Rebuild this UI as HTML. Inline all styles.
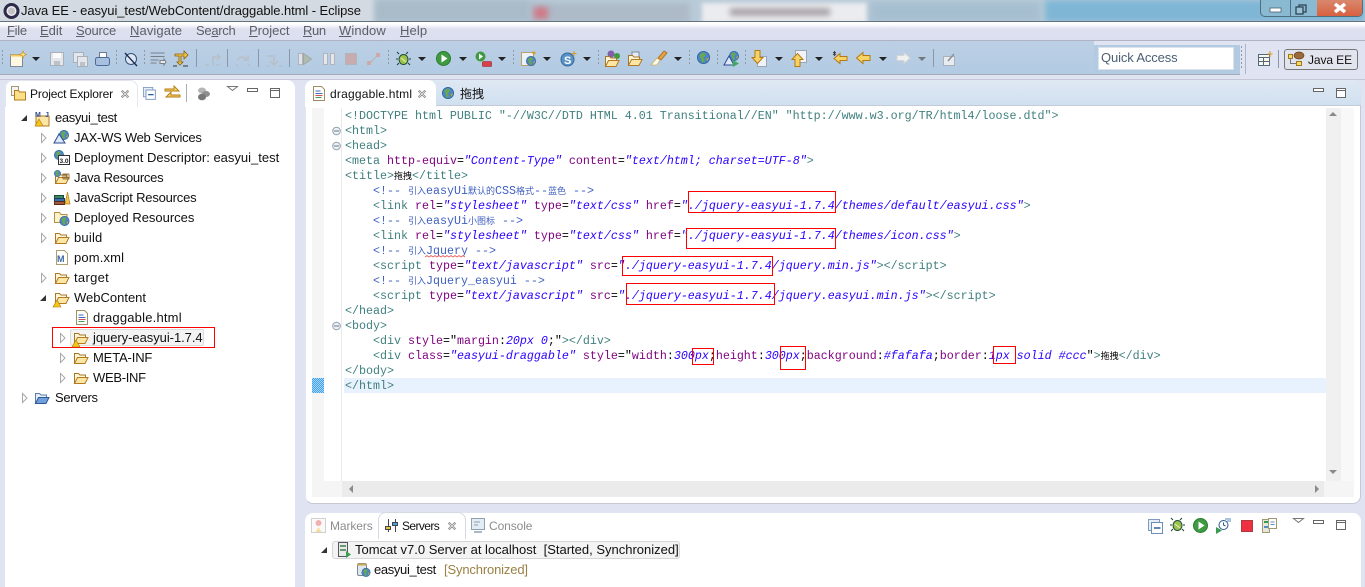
<!DOCTYPE html>
<html><head><meta charset="utf-8"><title>Eclipse</title>
<style>
html,body{margin:0;padding:0}
body{width:1365px;height:587px;overflow:hidden;position:relative;background:#dfe3f2;font-family:"Liberation Sans","Noto Sans CJK SC",sans-serif;font-size:13px;color:#111}
.a{position:absolute}
.t{position:absolute;white-space:nowrap;line-height:20px;height:20px}
.m{color:#5c5f66;top:21px}
.m u{text-decoration:underline}
pre{position:absolute;left:345px;top:109px;margin:0;font:11.67px/15px "Liberation Mono","Noto Sans CJK SC",monospace;color:#000;-webkit-text-size-adjust:none}
.g{color:#3f7f7f}.p{color:#7f007f}.v{color:#2a00ff;font-style:italic}.c{color:#3f5fbf}.k{color:#000}
.s{font-size:9px;line-height:9px}
.r{position:absolute;border:1px solid #f00;box-sizing:border-box}
</style></head><body>

<!-- title bar -->
<div class="a" style="left:0;top:0;width:1365px;height:21px;overflow:hidden;background:#b9cbd8">
 <div class="a" style="left:-10px;top:-6px;width:385px;height:34px;background:#d3dae2;filter:blur(3px)"></div>
 <div class="a" style="left:375px;top:0;width:155px;height:22px;background:#a9bbc9;filter:blur(3px)"></div>
 <div class="a" style="left:530px;top:3px;width:160px;height:20px;background:#adbac8;filter:blur(3px)"></div>
 <div class="a" style="left:534px;top:7px;width:14px;height:12px;background:#cf7a88;filter:blur(3px)"></div>
 <div class="a" style="left:702px;top:3px;width:165px;height:20px;background:#ebecef;filter:blur(2px)"></div>
 <div class="a" style="left:730px;top:8px;width:100px;height:8px;background:#a9a5a9;filter:blur(3px)"></div>
 <div class="a" style="left:870px;top:2px;width:170px;height:20px;background:#a6bfd0;filter:blur(3px)"></div>
 <div class="a" style="left:1045px;top:0;width:320px;height:22px;background:#7fb6d6;filter:blur(3px)"></div>
</div>
<div class="a" style="left:0;top:21px;width:1365px;height:1px;background:#64727d"></div>
<div class="t" style="left:21px;top:1px;font-size:13px;color:#111;letter-spacing:-.08px">Java EE - easyui_test/WebContent/draggable.html - Eclipse</div>
<!-- window controls -->
<div class="a" style="left:1260px;top:-2px;width:103px;height:19px;border:1px solid #4e6f80;border-radius:0 0 5px 5px;box-sizing:border-box;overflow:hidden;background:#8ab9d2">
 <div class="a" style="left:29px;top:0;width:1px;height:19px;background:#4e6f80"></div>
 <div class="a" style="left:56px;top:0;width:46px;height:19px;background:linear-gradient(#d98a70,#d85c3a)"></div>
</div>

<!-- menu bar -->
<div class="a" style="left:0;top:22px;width:1365px;height:19px;background:linear-gradient(#fff 0,#fff 2px,#dee0f0 7px,#dcdff0)"></div>
<div class="a" style="left:0;top:40px;width:1365px;height:1px;background:#aeb4c4"></div>
<div class="t m" style="left:7px;letter-spacing:-.3px"><u>F</u>ile</div>
<div class="t m" style="left:40px"><u>E</u>dit</div>
<div class="t m" style="left:76px;letter-spacing:-.2px"><u>S</u>ource</div>
<div class="t m" style="left:130px;letter-spacing:.1px"><u>N</u>avigate</div>
<div class="t m" style="left:196px;letter-spacing:-.3px">Se<u>a</u>rch</div>
<div class="t m" style="left:249px"><u>P</u>roject</div>
<div class="t m" style="left:303px;letter-spacing:-.4px"><u>R</u>un</div>
<div class="t m" style="left:339px;letter-spacing:.1px"><u>W</u>indow</div>
<div class="t m" style="left:400px;letter-spacing:.1px"><u>H</u>elp</div>

<!-- toolbar -->
<div class="a" style="left:0;top:41px;width:1365px;height:34px;background:#dfe3f2"></div>
<div class="a" style="left:0;top:41px;width:1094px;height:33px;background:linear-gradient(#bccfe4,#b2cbe3)"></div>
<div class="a" style="left:1094px;top:45px;width:146px;height:29px;background:#b2cbe3"></div>
<div class="a" style="left:0;top:74px;width:1240px;height:1px;background:#a6aab8"></div>
<div class="a" style="left:0;top:79px;width:1365px;height:1px;background:#c4c8d6"></div>
<div class="a" style="left:1098px;top:47px;width:136px;height:23px;background:#fff;border:1px solid #dbe2ea;box-sizing:border-box"></div>
<div class="t" style="left:1101px;top:48px;color:#4b5f74;letter-spacing:-.13px">Quick Access</div>
<div class="a" style="left:1284px;top:49px;width:74px;height:21px;background:#e3e5ee;border:1px solid #777;border-radius:3px;box-sizing:border-box"></div>
<div class="t" style="left:1308px;top:50px;font-size:12px;letter-spacing:-.1px">Java EE</div>

<!-- left panel -->
<div class="a" style="left:5px;top:80px;width:290px;height:507px;background:#fff;border-radius:8px 8px 0 0"></div>
<div class="a" style="left:5px;top:80px;width:133px;height:27px;border:1px solid #e3e6f0;border-bottom:0;border-radius:8px 8px 0 0;box-sizing:border-box"></div>
<div class="t" style="left:30px;top:84px;font-size:12px;letter-spacing:-.15px">Project Explorer</div>

<div class="a" style="left:70px;top:329px;width:134px;height:17px;background:#f3f3f3;border:1px solid #dcdcdc;border-radius:2px;box-sizing:border-box"></div>
<div class="t" style="left:55px;top:108px;letter-spacing:-.35px">easyui_test</div>
<div class="t" style="left:74px;top:128px;letter-spacing:-.27px">JAX-WS Web Services</div>
<div class="t" style="left:74px;top:148px">Deployment Descriptor: easyui_test</div>
<div class="t" style="left:74px;top:168px;letter-spacing:-.28px">Java Resources</div>
<div class="t" style="left:74px;top:188px;letter-spacing:-.2px">JavaScript Resources</div>
<div class="t" style="left:74px;top:208px;letter-spacing:-.02px">Deployed Resources</div>
<div class="t" style="left:74px;top:228px;letter-spacing:.2px">build</div>
<div class="t" style="left:74px;top:248px;letter-spacing:.15px">pom.xml</div>
<div class="t" style="left:74px;top:268px;letter-spacing:.3px">target</div>
<div class="t" style="left:74px;top:288px">WebContent</div>
<div class="t" style="left:93px;top:308px;letter-spacing:.2px">draggable.html</div>
<div class="t" style="left:93px;top:328px;letter-spacing:-.05px">jquery-easyui-1.7.4</div>
<div class="t" style="left:93px;top:348px;letter-spacing:-.15px">META-INF</div>
<div class="t" style="left:93px;top:368px;letter-spacing:-.3px">WEB-INF</div>
<div class="t" style="left:55px;top:388px;letter-spacing:-.3px">Servers</div>
<div class="r" style="left:52px;top:327px;width:163px;height:21px"></div>

<!-- editor panel -->
<div class="a" style="left:305px;top:80px;width:1056px;height:424px;background:#fff;border:1px solid #c6c9d2;border-top:0;border-left-color:#e3e6f0;border-radius:8px;box-sizing:border-box"></div>
<div class="a" style="left:305px;top:80px;width:1056px;height:26px;background:linear-gradient(#dfe8f3,#d0e0f0);border-radius:8px 8px 0 0"></div>
<div class="a" style="left:305px;top:80px;width:131px;height:27px;background:#fff;border-radius:8px 8px 0 0"></div>
<div class="a" style="left:436px;top:105px;width:925px;height:1px;background:#c5cbd6"></div>
<div class="t" style="left:330px;top:84px;font-size:12px;letter-spacing:.2px">draggable.html</div>
<div class="t" style="left:460px;top:84px;font-size:12px">拖拽</div>
<div class="a" style="left:312px;top:108px;width:12px;height:389px;background:#f5f5f5"></div>
<div class="a" style="left:341px;top:108px;width:1px;height:373px;background:#eaeaea"></div>
<div class="a" style="left:344px;top:378px;width:982px;height:15px;background:#e8f2fe"></div>
<div class="a" style="left:312px;top:378px;width:12px;height:15px;background:repeating-conic-gradient(#3fa0f0 0 25%,#a8d6fa 0 50%) 0 0/2px 2px"></div>
<div class="a" style="left:1326px;top:108px;width:15px;height:373px;background:#f0f0f0"></div>
<div class="a" style="left:1341px;top:108px;width:13px;height:389px;background:#f8f8f8"></div>
<div class="a" style="left:312px;top:481px;width:1042px;height:16px;background:#f5f5f5"></div>
<div class="a" style="left:342px;top:481px;width:982px;height:16px;background:#ebebeb"></div>

<pre><span class="g">&lt;!DOCTYPE html PUBLIC "-//W3C//DTD HTML 4.01 Transitional//EN" "http://www.w3.org/TR/html4/loose.dtd"&gt;</span>
<span class="g">&lt;html&gt;</span>
<span class="g">&lt;head&gt;</span>
<span class="g">&lt;meta</span> <span class="p">http-equiv</span>=<span class="v">"Content-Type"</span> <span class="p">content</span>=<span class="v">"text/html; charset=UTF-8"</span><span class="g">&gt;</span>
<span class="g">&lt;title&gt;</span><span class="s">拖拽</span><span class="g">&lt;/title&gt;</span>
    <span class="c">&lt;!-- <span class="s">引入</span>easyUi<span class="s">默认的</span>CSS<span class="s">格式</span>--<span class="s">蓝色</span> --&gt;</span>
    <span class="g">&lt;link</span> <span class="p">rel</span>=<span class="v">"stylesheet"</span> <span class="p">type</span>=<span class="v">"text/css"</span> <span class="p">href</span>=<span class="v">"./jquery-easyui-1.7.4/themes/default/easyui.css"</span><span class="g">&gt;</span>
    <span class="c">&lt;!-- <span class="s">引入</span>easyUi<span class="s">小图标</span> --&gt;</span>
    <span class="g">&lt;link</span> <span class="p">rel</span>=<span class="v">"stylesheet"</span> <span class="p">type</span>=<span class="v">"text/css"</span> <span class="p">href</span>=<span class="v">"./jquery-easyui-1.7.4/themes/icon.css"</span><span class="g">&gt;</span>
    <span class="c">&lt;!-- <span class="s">引入</span>Jquery --&gt;</span>
    <span class="g">&lt;script</span> <span class="p">type</span>=<span class="v">"text/javascript"</span> <span class="p">src</span>=<span class="v">"./jquery-easyui-1.7.4/jquery.min.js"</span><span class="g">&gt;&lt;/script&gt;</span>
    <span class="c">&lt;!-- <span class="s">引入</span>Jquery_easyui --&gt;</span>
    <span class="g">&lt;script</span> <span class="p">type</span>=<span class="v">"text/javascript"</span> <span class="p">src</span>=<span class="v">"./jquery-easyui-1.7.4/jquery.easyui.min.js"</span><span class="g">&gt;&lt;/script&gt;</span>
<span class="g">&lt;/head&gt;</span>
<span class="g">&lt;body&gt;</span>
    <span class="g">&lt;div</span> <span class="p">style</span>="<span class="p">margin</span>:<span class="v">20px 0</span>;"<span class="g">&gt;&lt;/div&gt;</span>
    <span class="g">&lt;div</span> <span class="p">class</span>=<span class="v">"easyui-draggable"</span> <span class="p">style</span>="<span class="p">width</span>:<span class="v">300px</span>;<span class="p">height</span>:<span class="v">300px</span>;<span class="p">background</span>:<span class="v">#fafafa</span>;<span class="p">border</span>:<span class="v">1px solid #ccc</span>"<span class="g">&gt;</span><span class="s">拖拽</span><span class="g">&lt;/div&gt;</span>
<span class="g">&lt;/body&gt;</span>
<span class="g">&lt;/html&gt;</span></pre>

<div class="r" style="left:688px;top:191px;width:148px;height:22px"></div>
<div class="r" style="left:686px;top:228px;width:150px;height:21px"></div>
<div class="r" style="left:622px;top:256px;width:151px;height:20px"></div>
<div class="r" style="left:626px;top:283px;width:149px;height:22px"></div>
<div class="r" style="left:692px;top:348px;width:22px;height:17px"></div>
<div class="r" style="left:780px;top:346px;width:26px;height:24px"></div>
<div class="r" style="left:993px;top:346px;width:23px;height:18px"></div>

<!-- bottom panel -->
<div class="a" style="left:305px;top:513px;width:1056px;height:74px;background:#fff;border-radius:8px 8px 0 0"></div>
<div class="a" style="left:378px;top:512px;width:88px;height:27px;border:1px solid #d5d9e4;border-bottom:0;border-radius:8px 8px 0 0;box-sizing:border-box"></div>
<div class="t" style="left:330px;top:516px;color:#8d8d8d;font-size:12px;letter-spacing:-.1px">Markers</div>
<div class="t" style="left:402px;top:516px;font-size:12px;letter-spacing:-.6px">Servers</div>
<div class="t" style="left:489px;top:516px;color:#8d8d8d;font-size:12px;letter-spacing:-.1px">Console</div>
<div class="a" style="left:332px;top:541px;width:348px;height:18px;background:#f3f3f3;border:1px solid #d6d6d6;border-radius:3px;box-sizing:border-box"></div>
<div class="t" style="left:355px;top:540px;white-space:pre">Tomcat v7.0 Server at localhost  [Started, Synchronized]</div>
<div class="t" style="left:374px;top:560px;letter-spacing:-.35px">easyui_test</div>
<div class="t" style="left:444px;top:560px;color:#9b8044;letter-spacing:-.15px">[Synchronized]</div>

<!-- icons -->
<svg class="a" style="left:0;top:0" width="1365" height="587" viewBox="0 0 1365 587" fill="none">
<defs>
<g id="fo"><path d="M1.5 13.5V3.5h4l1.5 1.5h5.5v2.5" fill="#fdf6d8" stroke="#a8772b"/><path d="M1.5 13.5l3-6h10.5l-3 6z" fill="#fbe6a6" stroke="#b57a1f"/></g>
<path id="tc" d="M.5.5l4.5 4.5-4.5 4.5z" fill="#fff" stroke="#a8a8a8"/>
<path id="te" d="M0 6L6 0v6z" fill="#333"/>
<path id="dd" d="M0 0h8L4 4z" fill="#222"/>
<path id="wn" d="M4 0l4 7H0z" fill="#f5c518" stroke="#a87a10" stroke-width=".6"/>
<g id="gl"><circle cx="5" cy="5" r="4.7" fill="#4a86c5" stroke="#2b5f96" stroke-width=".6"/><path d="M2 3l3-2 2 2-2 2 1 3-2 1-1-3z" fill="#6aa84f"/><path d="M7 6l2-1-1 3z" fill="#c9a13a"/></g>
<g id="xx"><path d="M.5 1.5l1-1L4 3 6.500.5l1 1L5 4l2.500 2.500-1 1L4 5 1.500 7.500l-1-1L3 4z" fill="#fff" stroke="#8a8a8a" stroke-width=".8"/></g>
<g id="doc"><path d="M1.500.5h8l3 3v11h-11z" fill="#fff" stroke="#a08f63"/><path d="M3.500 5h5M3.500 7.500h7" stroke="#3a6fc4"/><path d="M3.500 9.500h7" stroke="#d05050"/><path d="M3.500 11.500h6" stroke="#3aa060"/></g>
<g id="mn"><rect x=".5" y=".5" width="10" height="3" fill="#fff" stroke="#666"/></g>
<g id="mx"><rect x=".5" y=".5" width="9" height="9" fill="#fff" stroke="#666"/><path d="M.5 2.500h9" stroke="#666"/></g>
<g id="vm"><path d="M.5.5h10L5.500 4.500z" fill="#fff" stroke="#777"/></g>
<g id="bug"><path d="M3 2L1 0M10 2l2-2M2 7H0M13 7h2M3 11l-2 2M12 11l2 2" stroke="#143" /><ellipse cx="7.500" cy="7.500" rx="4.500" ry="5" fill="#9cc24a" stroke="#1c4a3a"/><path d="M5 6l5 4" stroke="#e8f0c0"/></g>
<g id="run"><circle cx="7.500" cy="7.500" r="7" fill="#3f9b42" stroke="#2b7a30"/><path d="M5.500 3.500l6 4-6 4z" fill="#fff"/></g>
<g id="colA"><rect x=".5" y=".5" width="11" height="11" fill="#e6eef8" stroke="#7d9cc0"/><rect x="3.500" y="3.500" width="11" height="11" fill="#fff" stroke="#6a8fb8"/><path d="M6 9h6.500" stroke="#2a5fa0" stroke-width="1.500"/></g>
</defs>
<!-- title icon -->
<circle cx="11.500" cy="11" r="6.500" fill="#eee" stroke="#2d2a4a" stroke-width="3"/><circle cx="11.500" cy="11" r="3.500" fill="#5a5a6a" opacity=".3"/>
<!-- window controls -->
<rect x="1270" y="8" width="11" height="4" fill="#fff" stroke="#4b6170" stroke-width=".8"/>
<rect x="1299" y="5" width="7" height="7" fill="none" stroke="#2f4656" stroke-width="1.300"/><rect x="1296" y="7" width="7" height="7" fill="#9cc2d8" stroke="#2f4656" stroke-width="1.300"/>
<path d="M1335 4l10 8M1345 4l-10 8" stroke="#fff" stroke-width="3.500"/>
<!-- grips -->
<g stroke="#8e9aa6" stroke-dasharray="2 2" stroke-width="1"><path d="M2.500 50v16M116.500 50v16M144.500 50v16M388.500 50v16M513.500 50v16M598.500 50v16M689.500 50v16M717.500 50v16M745.500 50v16M1241.500 46v24"/></g>
<g stroke="#8a97a6"><path d="M196.500 49v18M227.500 49v18M258.500 49v18M289.500 49v18M933.500 49v18"/></g>
<path d="M1245.500 44v30" stroke="#aab7c6"/><path d="M1278.500 50v18" stroke="#8a97a6"/>
<!-- dropdowns -->
<use href="#dd" x="32" y="57"/><use href="#dd" x="418" y="57"/><use href="#dd" x="459" y="57"/><use href="#dd" x="498" y="57"/><use href="#dd" x="543" y="57"/><use href="#dd" x="583" y="57"/><use href="#dd" x="674" y="57"/><use href="#dd" x="775" y="57"/><use href="#dd" x="815" y="57"/><use href="#dd" x="879" y="57"/>
<path d="M918 57h8l-4 4z" fill="#75797f"/>
<!-- toolbar icons -->
<path d="M10.500 54.500h12v12h-12z" fill="#fdf8df" stroke="#7a8aa0"/><path d="M10.500 54.500h12v2h-12z" fill="#f4c95a"/><path d="M23 51l1 2.500 2.500 1-2.500 1-1 2.500-1-2.500-2.500-1 2.500-1z" fill="#ffe680" stroke="#c08a1a" stroke-width=".6"/>
<g transform="translate(50,52)"><rect x=".5" y=".5" width="13" height="13" fill="#e3e6ea" stroke="#aab0b8"/><rect x="3" y="1" width="8" height="5" fill="#fbfbfb"/><rect x="4" y="9" width="6" height="4" fill="#bcc2c8"/></g>
<g transform="translate(73,52)"><rect x=".5" y=".5" width="10" height="10" fill="#e3e6ea" stroke="#aab0b8"/><rect x="4.500" y="4.500" width="10" height="10" fill="#e3e6ea" stroke="#aab0b8"/><rect x="7" y="10" width="5" height="4" fill="#bcc2c8"/></g>
<g transform="translate(95,52)"><rect x="4.500" y=".5" width="7" height="6" fill="#fff" stroke="#6d7a90"/><rect x=".5" y="5.500" width="14" height="8" rx="2" fill="#a9bfe0" stroke="#4a6a9a"/></g>
<g transform="translate(124,52)"><circle cx="7" cy="7" r="5.500" fill="#dde6f2" stroke="#30507a"/><path d="M1 1l12 13" stroke="#14264a" stroke-width="1.300"/></g>
<g transform="translate(150,52)" stroke="#7a7f86"><path d="M.5 1h14M.5 4.500h14M.5 8h8M.5 11h6"/><path d="M10 8.500h4V7l2 3-2 3v-1.500h-4z" fill="#e8ecf0"/></g>
<g transform="translate(173,51)"><path d="M2 3h9V0l4 4-4 4V5H8v6h2l-3 3-3-3h2V5H2z" fill="#f2c64a" stroke="#86610e" stroke-width=".8"/><path d="M0 15h4M10 15h5" stroke="#333"/></g>
<g stroke="#b9bfc7" stroke-width="1.500"><path d="M205 65h4M216 65h4M213 65v-8h6M217 54l3 3-3 3" fill="none"/><path d="M237 60q5-6 11 0M248 55v5h-5M236 65h2M248 65h2" fill="none"/><path d="M267 56h7v8M270 61l4 4 4-4M267 66h3M279 66h3" fill="none"/></g>
<g transform="translate(298,52)"><rect x=".5" y="1.500" width="4" height="11" fill="#dfe3e8" stroke="#b0b5bc"/><path d="M5.500 1.500l8 5.500-8 5.500z" fill="#aebcb0" stroke="#a0a8a4"/></g>
<rect x="323.500" y="53.500" width="4" height="11" fill="#e3e6ea" stroke="#b0b5bc"/><rect x="330.500" y="53.500" width="4" height="11" fill="#e3e6ea" stroke="#b0b5bc"/>
<rect x="345.500" y="53.500" width="11" height="11" fill="#c7abae" stroke="#b0b5bc"/>
<path d="M369 64l9-9" stroke="#b8b5b5"/><rect x="367" y="61" width="4" height="4" fill="#cfa9a9"/><rect x="376" y="53" width="4" height="4" fill="#cfa9a9"/>
<use href="#bug" x="396" y="52"/><use href="#run" x="436" y="51"/>
<g transform="translate(475,51)"><circle cx="5.500" cy="5.500" r="5" fill="#3f9b42"/><path d="M4 2.500l4 3-4 3z" fill="#fff"/><rect x="7.500" y="10.500" width="9" height="5" rx="1" fill="#d8404a" stroke="#8a2028" stroke-width=".6"/></g>
<g transform="translate(521,51)"><rect x=".5" y="1.500" width="12" height="13" fill="#eef2f8" stroke="#b9a26a"/><use href="#gl" x="5" y="5"/><path d="M13 0v4M11 2h4" stroke="#d89a20"/></g>
<g transform="translate(561,51)"><circle cx="6.500" cy="8.500" r="6.500" fill="#5a93c8" stroke="#35689c"/><text x="3" y="13" font-family="Liberation Sans" font-size="11" font-weight="bold" fill="#fff">S</text><path d="M13 0v5M10.500 2.500h5" stroke="#d89a20"/></g>
<g transform="translate(604,50)"><circle cx="7" cy="4" r="3.500" fill="#8060a8"/><circle cx="13" cy="6" r="3" fill="#3f9b42"/><g transform="translate(0,3)"><use href="#fo"/></g></g>
<g transform="translate(627,51)"><rect x="5" y="1" width="7" height="5" fill="#e8ecf4" stroke="#7a88a0"/><g transform="translate(0,1)"><use href="#fo"/></g></g>
<g transform="translate(651,51)"><path d="M13 0l3 2-6 7-3-2z" fill="#e8a040" stroke="#a06a18" stroke-width=".8"/><path d="M6 7l3 2-3 5H0z" fill="#fffbe8" stroke="#c8b070" stroke-width=".8"/></g>
<use href="#gl" x="0" y="0" transform="translate(697,51) scale(1.300)"/>
<g transform="translate(724,51)"><use href="#gl" x="5"/><path d="M5 5L0 14h10z" fill="#dfe8f6" stroke="#2a4a90"/><path d="M9 9l6 3.500-6 3.500z" fill="#3faa60"/></g>
<g transform="translate(752,50)"><rect x="5.500" y="6.500" width="9" height="10" fill="#f0f3f8" stroke="#9aa6b6"/><path d="M3 .5h5v7h3l-5.500 6L0 7.500h3z" fill="#f7d264" stroke="#b47a14"/></g>
<g transform="translate(792,50)"><rect x="3.500" y=".5" width="11" height="12" fill="#f0f3f8" stroke="#9aa6b6"/><path d="M3 16.500h5v-7h3l-5.500-6-5.500 6h3z" fill="#f7d264" stroke="#b47a14"/></g>
<g transform="translate(832,51)"><path d="M15 5.500H8v-3L2 7.500l6 5v-3h7z" fill="#f7d264" stroke="#b47a14"/><path d="M1 1l3 3M4 1L1 4M2.500 0v5" stroke="#333" stroke-width=".8"/></g>
<path d="M870 55.500h-7v-3l-6.500 5.500 6.500 5.500v-3h7z" fill="#f7d264" stroke="#b47a14"/>
<path d="M897 55.500h7v-3l6 5.500-6 5.500v-3h-7z" fill="#f0f0ee" stroke="#d2d4d6"/>
<g transform="translate(943,53)"><rect x=".5" y="3.500" width="11" height="9" fill="#e8ecf0" stroke="#aab0b8"/><path d="M5 8l6-7" stroke="#8a9098" stroke-width="1.500"/></g>
<!-- perspective -->
<g transform="translate(1258,51)"><rect x=".5" y="3.500" width="11" height="11" fill="#fbf6e8" stroke="#4e6a80"/><path d="M.5 6.500h11M.5 10.500h11M5.500 6.500v8" stroke="#4e6a80"/><path d="M12 0v6M9.500 3h5" stroke="#d89a20"/></g>
<g transform="translate(1288,52)"><rect x=".5" y="2.500" width="4" height="4" fill="#f5d96a" stroke="#a07a18"/><rect x="8.500" y="9.500" width="5" height="4" fill="#f5d96a" stroke="#a07a18"/><path d="M2.500 6.500v5h6" stroke="#777"/><ellipse cx="11" cy="3.500" rx="5" ry="3.500" fill="#9a6a3a" stroke="#5e3e1e" stroke-width=".7"/></g>
<!-- left panel header -->
<g transform="translate(11,86)"><rect x=".5" y=".5" width="7" height="9" fill="#f4f4f4" stroke="#a59a78"/><g transform="translate(3,3)"><path d="M.5 11V1.500h4l1 1.500h6v8z" fill="#fbe08a" stroke="#b57a1f"/></g></g>
<use href="#xx" x="121" y="90"/>
<g transform="translate(143,87) scale(.85)"><use href="#colA"/></g>
<g transform="translate(165,85)"><path d="M0 4h9V1l5 5H0z" fill="#f7d264" stroke="#b47a14" stroke-width=".9"/><path d="M15 10H6V7l-5 5h14z" fill="#f7d264" stroke="#b47a14" stroke-width=".9"/></g>
<path d="M186.500 84v18" stroke="#a8acb4"/>
<g transform="translate(197,87)"><ellipse cx="5" cy="3.500" rx="4" ry="3" fill="#b5b5b5"/><ellipse cx="9" cy="7" rx="4" ry="3" fill="#8e8e8e"/><ellipse cx="5" cy="10" rx="4" ry="3.300" fill="#777"/></g>
<use href="#vm" x="227" y="86"/><use href="#mn" x="247" y="88"/><use href="#mx" x="270" y="88"/>
<!-- tree -->
<use href="#te" x="21" y="115"/>
<g transform="translate(35,110)"><path d="M1 6h13v10H1z" fill="#fbe6a6" stroke="#b57a1f"/><text x="0" y="7" font-family="Liberation Sans" font-size="7" font-weight="bold" fill="#2b4c8c">M</text><text x="10" y="7" font-family="Liberation Sans" font-size="7" font-weight="bold" fill="#2b4c8c">J</text><use href="#wn" x="0" y="9"/></g>
<use href="#tc" x="41" y="133"/><use href="#tc" x="41" y="153"/><use href="#tc" x="41" y="173"/><use href="#tc" x="41" y="193"/><use href="#tc" x="41" y="213"/><use href="#tc" x="41" y="233"/><use href="#tc" x="41" y="273"/>
<use href="#te" x="40" y="295"/>
<use href="#tc" x="60" y="333"/><use href="#tc" x="60" y="353"/><use href="#tc" x="60" y="373"/><use href="#tc" x="22" y="393"/>
<g transform="translate(54,130)"><use href="#gl" x="5" y="0"/><path d="M5 4L0 13h11z" fill="#dfe8f6" stroke="#2a4a90"/></g>
<g transform="translate(54,150)"><use href="#gl" x="0" y="0"/><rect x="4.500" y="5.500" width="11" height="9" fill="#fff" stroke="#333"/><text x="5.500" y="13" font-family="Liberation Sans" font-size="6.500" font-weight="bold" fill="#222">3.0</text></g>
<g transform="translate(54,170)"><use href="#fo"/><use href="#gl" transform="scale(.7)"/><path d="M9 4h6v5H9zM11 4v5M13 4v5" stroke="#7a5a20" stroke-width=".8"/></g>
<g transform="translate(54,190)"><rect x=".5" y="5.500" width="9" height="3" fill="#3c8a60" stroke="#1e4a3a"/><rect x=".5" y="8.500" width="10" height="3" fill="#3a70a8" stroke="#1e3a6a"/><rect x=".5" y="11.500" width="10" height="3" fill="#a8583a" stroke="#5a2a1a"/><path d="M11 14L13.500 2 16 14z" fill="#f2c64a" stroke="#b08418" stroke-width=".7"/></g>
<g transform="translate(54,210)"><path d="M.5 12.500V2.500h5l1.500 2h6v8z" fill="#fdf3c6" stroke="#b09048"/><use href="#gl" x="5.500" y="6"/></g>
<use href="#fo" x="54" y="230"/>
<g transform="translate(56,250)"><path d="M.5.500h8l3 3v11H.5z" fill="#fff" stroke="#b0a070"/><text x="1" y="12" font-family="Liberation Sans" font-size="9" font-weight="bold" fill="#3a66a8">M</text></g>
<use href="#fo" x="54" y="270"/>
<use href="#fo" x="54" y="290"/><use href="#wn" x="53" y="300"/>
<use href="#doc" x="75" y="310"/>
<use href="#fo" x="73" y="330"/><use href="#wn" x="72" y="340"/>
<use href="#fo" x="73" y="350"/><use href="#fo" x="73" y="370"/>
<g transform="translate(34,390)"><path d="M1.500 13.500V3.500h4l1.500 1.500h5.500v2.500" fill="#e8eef8" stroke="#5a7ca8"/><path d="M1.500 13.500l3-6h10.500l-3 6z" fill="#6fa0dc" stroke="#2e5a98"/></g>
<!-- editor tabs -->
<use href="#doc" x="312" y="86"/><use href="#xx" x="418" y="90"/>
<use href="#gl" transform="translate(442,87) scale(1.200)"/>
<use href="#mn" x="1313" y="88"/><use href="#mx" x="1336" y="88"/>
<!-- fold -->
<g stroke="#8fa0ae" fill="#eef1f4"><circle cx="336.500" cy="131" r="3.800"/><circle cx="336.500" cy="146" r="3.800"/><circle cx="336.500" cy="326" r="3.800"/></g>
<path d="M334 131h5M334 146h5M334 326h5" stroke="#6c7c8a"/>
<!-- scroll arrows -->
<path d="M1329 470h8l-4 4z" fill="#8a8a8a"/>
<path d="M1329 116h8l-4-4z" fill="#8a8a8a"/>
<path d="M353 485v8l-4-4z" fill="#8a8a8a"/>
<path d="M1315 485v8l4-4z" fill="#8a8a8a"/>
<!-- squiggle -->
<path d="M425 257l2-1.500 2 1.500 2-1.500 2 1.500 2-1.500 2 1.500 2-1.500 2 1.500 2-1.500 2 1.500 2-1.500 2 1.500 2-1.500 2 1.500 2-1.500 2 1.500 2-1.500 2 1.500 2-1.500 2 1.500" stroke="#e86060" stroke-width=".8"/>
<!-- bottom tabs -->
<g transform="translate(311,518)" opacity=".55"><rect x=".5" y=".5" width="14" height="14" fill="#f6f6f6" stroke="#aaa"/><circle cx="7.500" cy="5" r="3" fill="#e87070"/><path d="M4.500 14l3-5 3 5z" fill="#f0c050"/></g>
<g transform="translate(384,519)" stroke="#445"><path d="M4.500 0v13M11.500 0v13"/><rect x="1.500" y="7.500" width="5" height="3" fill="#e6c040"/><rect x="8.500" y="3.500" width="5" height="3" fill="#50a0d8"/></g>
<use href="#xx" x="448" y="522"/>
<g transform="translate(471,518)" opacity=".7"><rect x=".5" y=".5" width="13" height="11" fill="#d8e4f0" stroke="#60788f"/><path d="M3 4h6M3 7h4" stroke="#60788f"/><path d="M3 14h8" stroke="#60788f" stroke-width="1.500"/></g>
<use href="#te" x="321" y="547"/>
<g transform="translate(338,542)"><rect x=".5" y=".5" width="9" height="14" fill="#e8ece8" stroke="#556"/><path d="M2 4h6M2 8h6" stroke="#3a7a4a" stroke-width="1.500"/><path d="M8 9l5 3.500L8 16z" fill="#3aa050"/></g>
<g transform="translate(356,562)"><rect x="1.500" y="1.500" width="9" height="12" rx="1.500" fill="#dfe6ee" stroke="#7a8a9a"/><path d="M1.500 2.500h9" stroke="#c8a850" stroke-width="2"/><use href="#gl" x="5" y="6" transform="translate(1,.5) scale(.9)"/></g>
<!-- servers toolbar -->
<use href="#colA" x="1148" y="519"/>
<use href="#bug" x="1170" y="518"/>
<use href="#run" x="1193" y="518"/>
<g transform="translate(1216,517)"><circle cx="7.500" cy="8" r="4.500" fill="#fff" stroke="#2a5a8a"/><path d="M7.500 5.500V8l2 1" stroke="#2a5a8a"/><path d="M0 10l6 3.500L0 17z" fill="#3a9a50"/><path d="M9 2h6M11 4h4" stroke="#5a8ac0"/></g>
<rect x="1241.500" y="520.500" width="11" height="11" fill="#ee3040" stroke="#b03a40"/>
<g transform="translate(1262,518)"><rect x=".5" y="1.500" width="7" height="13" fill="#e4e8d8" stroke="#a09870"/><rect x="6.500" y=".5" width="8" height="10" fill="#fff" stroke="#a09870"/><path d="M2 4h4" stroke="#3a9a50" stroke-width="2"/><path d="M2 9h4" stroke="#5a8ac0" stroke-width="2"/><path d="M8.500 4h4M8.500 6.500h4" stroke="#5a8ac0"/></g>
<use href="#vm" x="1293" y="518"/><use href="#mn" x="1313" y="520"/><use href="#mx" x="1336" y="520"/>
</svg>
</body></html>
